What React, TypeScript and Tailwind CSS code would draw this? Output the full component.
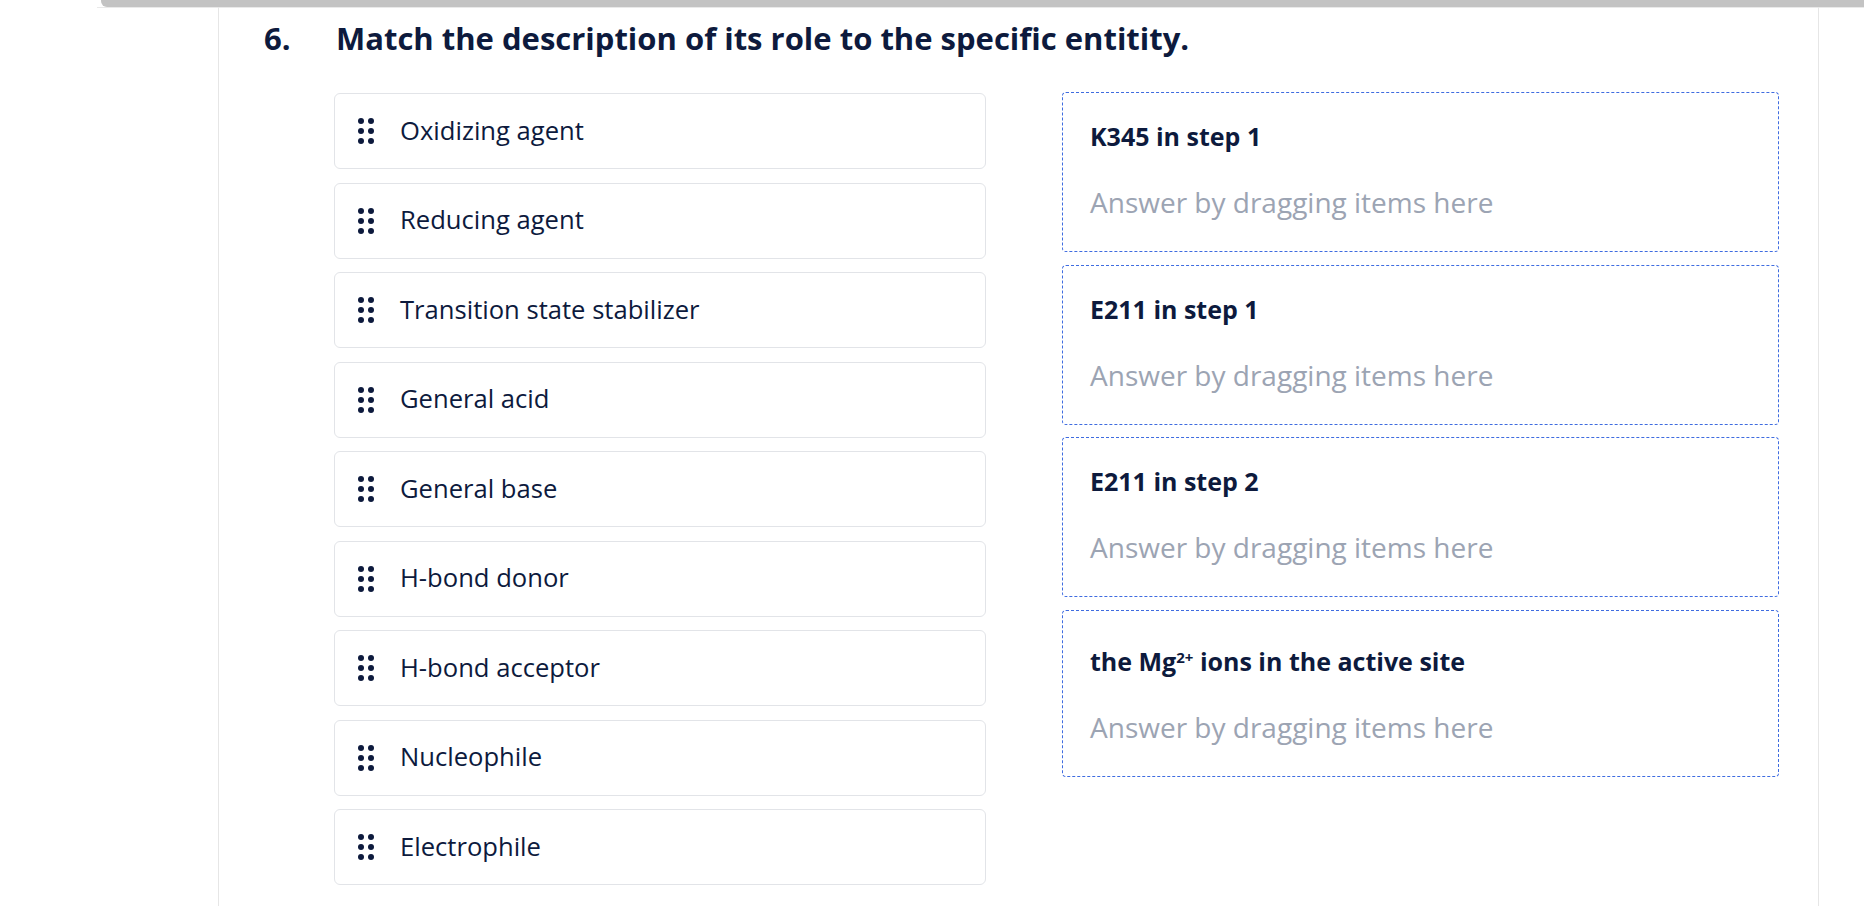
import React from "react";

const items = [
  "Oxidizing agent",
  "Reducing agent",
  "Transition state stabilizer",
  "General acid",
  "General base",
  "H-bond donor",
  "H-bond acceptor",
  "Nucleophile",
  "Electrophile",
];

function DragDots() {
  return (
    <svg width="16" height="26" viewBox="0 0 16 26" className="shrink-0">
      {[3, 13, 23].map((cy) => (
        <g key={cy}>
          <circle cx="3" cy={cy} r="3" fill="#0d1a3d" />
          <circle cx="13" cy={cy} r="3" fill="#0d1a3d" />
        </g>
      ))}
    </svg>
  );
}

function DropZone({ title, tall }: { title: React.ReactNode; tall?: boolean }) {
  return (
    <div
      className={
        "border border-dashed border-[#3f6ce0] rounded-[4px] pl-[27px] pr-6 pb-[30px] " +
        (tall ? "pt-[34px]" : "pt-[27px]")
      }
    >
      <div className="text-[25px] leading-[32px] font-bold text-[#0d1a3d]">{title}</div>
      <div className="mt-[31px] text-[28px] leading-[38px] text-[#9ca4b3]">
        Answer by dragging items here
      </div>
    </div>
  );
}

export default function App() {
  return (
    <div
      className="h-[906px] w-full bg-white overflow-hidden flex flex-col"
      style={{ fontFamily: '"Open Sans", "Noto Sans", sans-serif' }}
    >
      {/* browser-ish top strip */}
      <div className="ml-[101px] h-[7px] bg-[#c3c3c3] rounded-bl-[6px] shrink-0" />
      <div className="ml-[97px] h-[4px] border-t border-[#e9e9e9] shrink-0" />

      <div className="ml-[218px] w-[1601px] flex-1 border-x border-[#e6e6e6] -mt-[4px]">
        {/* Question */}
        <div className="flex items-center pl-[45px] pt-[11px] text-[31px] leading-[40px] font-bold text-[#0d1a3d]">
          <span className="w-[72px]">6.</span>
          <span>Match the description of its role to the specific entitity.</span>
        </div>

        <div className="flex items-start pl-[115px] mt-[35px]">
          {/* Items */}
          <div className="w-[652px] flex flex-col gap-[13.5px]">
            {items.map((label) => (
              <div
                key={label}
                className="h-[76px] border border-[#e2e4e8] rounded-[6px] flex items-center pl-[23px] gap-[26px] text-[25.6px] text-[#0d1a3d]"
              >
                <DragDots />
                <span>{label}</span>
              </div>
            ))}
          </div>

          {/* Targets */}
          <div className="ml-[76px] w-[717px] flex flex-col gap-[12.5px] -mt-[1px]">
            <DropZone title="K345 in step 1" />
            <DropZone title="E211 in step 1" />
            <DropZone title="E211 in step 2" />
            <DropZone
              tall
              title={
                <>
                  the Mg<sup className="text-[15px]">2+</sup> ions in the active site
                </>
              }
            />
          </div>
        </div>
      </div>
    </div>
  );
}
